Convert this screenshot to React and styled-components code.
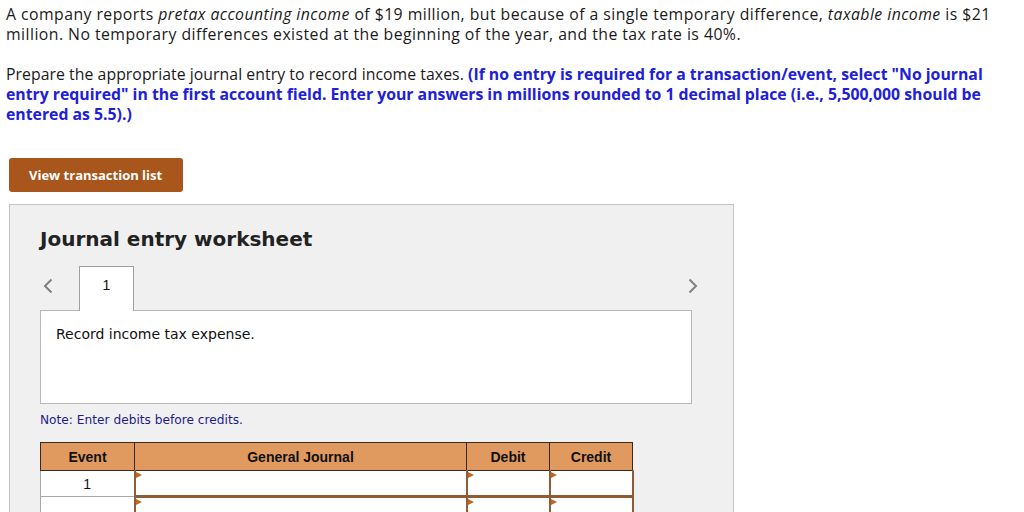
import React from "react";
import styled, { createGlobalStyle } from "styled-components";

const Global = createGlobalStyle`
  body {
    margin: 0;
    background: #fff;
  }
`;

const Page = styled.div`
  padding: 4px 0 0 6px;
  width: 1024px;
  box-sizing: border-box;
`;

const Para = styled.p`
  margin: 0 0 ${(p) => p.$gap || 0}px;
  font-family: "Open Sans", "Lato", sans-serif;
  font-size: 15.8px;
  letter-spacing: ${(p) => p.$ls || 0.45}px;
  line-height: 20.3px;
  color: #1a1a1a;
  width: 1015px;
  white-space: nowrap;
`;

const Blue = styled.span`
  color: #2020d8;
  font-weight: bold;
  letter-spacing: 0;
`;

const ListButton = styled.button`
  display: block;
  margin: 34px 0 0 3px;
  width: 174px;
  height: 34px;
  border: none;
  border-radius: 3px;
  background: #a8561b;
  color: #fff;
  font-family: "Open Sans", sans-serif;
  font-weight: bold;
  font-size: 13px;
  text-align: left;
  padding: 0 0 0 20px;
`;

const Panel = styled.div`
  margin: 12px 0 0 3px;
  width: 725px;
  height: 320px;
  box-sizing: border-box;
  background: #f0f0f0;
  border: 1px solid #c4c4c4;
  padding: 22px 41px 0 30px;
`;

const Title = styled.h2`
  margin: 0;
  font-family: "DejaVu Sans", Verdana, sans-serif;
  font-weight: bold;
  font-size: 20px;
  color: #222;
  line-height: 24px;
`;

const TabRow = styled.div`
  display: flex;
  align-items: flex-end;
  margin: 14px -8px 0 0;
  height: 45px;
`;

const Arrow = styled.div`
  width: ${(p) => p.$w}px;
  height: 45px;
  display: flex;
  align-items: center;
  justify-content: ${(p) => (p.$right ? "flex-end" : "flex-start")};
  padding-left: ${(p) => (p.$right ? 0 : 3)}px;
  padding-right: ${(p) => (p.$right ? 2 : 0)}px;
  padding-bottom: 4px;
  box-sizing: border-box;
  margin-left: ${(p) => (p.$right ? "auto" : "0")};
`;

const Tab = styled.div`
  width: 55px;
  height: 45px;
  box-sizing: border-box;
  background: #fff;
  border: 1px solid #a0a0a0;
  border-bottom: none;
  margin-bottom: -1px;
  position: relative;
  z-index: 1;
  display: flex;
  justify-content: center;
  padding-top: 10px;
  font-family: "Liberation Sans", Arial, sans-serif;
  font-size: 14px;
  color: #111;
`;

const InfoBox = styled.div`
  height: 94px;
  box-sizing: border-box;
  background: #fff;
  border: 1px solid #b8b8b8;
  padding: 15px 15px;
  font-family: "DejaVu Sans", Verdana, sans-serif;
  font-size: 14px;
  color: #111;
`;

const Note = styled.div`
  margin-top: 9px;
  font-family: "DejaVu Sans", Verdana, sans-serif;
  font-size: 12.2px;
  color: #1d1d8a;
  line-height: 14px;
`;

const Table = styled.table`
  margin-top: 15px;
  border-collapse: collapse;
  width: 588px;
  table-layout: fixed;
`;

const Th = styled.th`
  width: ${(p) => p.$w}px;
  height: 27px;
  padding: 0;
  background: #e09a5f;
  border: 1px solid #3b2a1c;
  font-family: "Liberation Sans", Arial, sans-serif;
  font-size: 14px;
  font-weight: bold;
  color: #111;
`;

const EventCell = styled.td`
  height: 24px;
  padding: 0;
  background: #fff;
  border: 1px solid #a8a8a8;
  text-align: center;
  font-family: "Liberation Sans", Arial, sans-serif;
  font-size: 14px;
  color: #111;
`;

const InputCell = styled.td`
  height: 24px;
  padding: 0;
  background: #fff;
  border: 2px solid #8e5d38;
  border-top-width: ${(p) => (p.$first ? 1 : 3)}px;
  position: relative;

  &::before {
    content: "";
    position: absolute;
    left: 0;
    top: 1px;
    border-left: 6px solid #c0661f;
    border-top: 3.5px solid transparent;
    border-bottom: 3.5px solid transparent;
  }
`;

const Chevron = ({ dir }) => (
  <svg width="10" height="16" viewBox="0 0 10 16">
    <path
      d={dir === "left" ? "M8.5 1.5 L2 8 L8.5 14.5" : "M1.5 1.5 L8 8 L1.5 14.5"}
      fill="none"
      stroke="#808080"
      strokeWidth="2"
    />
  </svg>
);

export default function App() {
  const rows = ["1", ""];
  return (
    <Page>
      <Global />
      <Para $gap={19}>
        A company reports <i>pretax accounting income</i> of $19 million, but because of a single
        temporary difference, <i>taxable income</i> is $21
        <br />
        million. No temporary differences existed at the beginning of the year, and the tax rate is
        40%.
      </Para>
      <Para $ls={0.05}>
        Prepare the appropriate journal entry to record income taxes.{" "}
        <Blue>
          (If no entry is required for a transaction/event, select "No journal
          <br />
          entry required" in the first account field. Enter your answers in millions rounded to 1
          decimal place (i.e., 5,500,000 should be
          <br />
          entered as 5.5).)
        </Blue>
      </Para>
      <ListButton>View transaction list</ListButton>
      <Panel>
        <Title>Journal entry worksheet</Title>
        <TabRow>
          <Arrow $w={39}>
            <Chevron dir="left" />
          </Arrow>
          <Tab>1</Tab>
          <Arrow $w={40} $right>
            <Chevron dir="right" />
          </Arrow>
        </TabRow>
        <InfoBox>Record income tax expense.</InfoBox>
        <Note>Note: Enter debits before credits.</Note>
        <Table>
          <thead>
            <tr>
              <Th $w={93}>Event</Th>
              <Th $w={331}>General Journal</Th>
              <Th $w={82}>Debit</Th>
              <Th $w={82}>Credit</Th>
            </tr>
          </thead>
          <tbody>
            {rows.map((ev, i) => (
              <tr key={i}>
                <EventCell>{ev}</EventCell>
                <InputCell $first={i === 0} />
                <InputCell $first={i === 0} />
                <InputCell $first={i === 0} />
              </tr>
            ))}
          </tbody>
        </Table>
      </Panel>
    </Page>
  );
}
